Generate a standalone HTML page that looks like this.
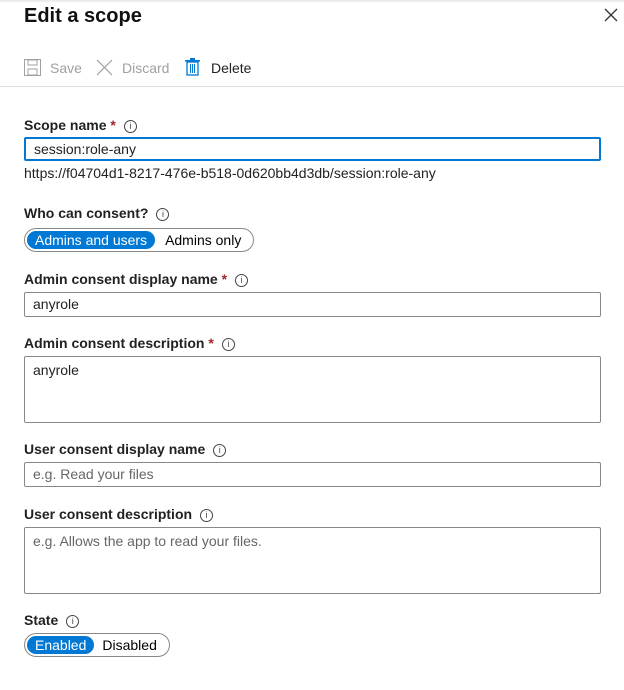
<!DOCTYPE html>
<html><head><style>
body{margin:0;width:624px;height:690px;background:#fff;font-family:"Liberation Sans",sans-serif;color:#000;position:relative;overflow:hidden}
.a{position:absolute;white-space:nowrap}
.lbl{font-size:14px;font-weight:bold;color:#222}
.lbl .s{color:#a4262c}
.info{display:inline-block;width:11px;height:11px;border:1px solid #444;border-radius:50%;font-size:9px;line-height:11px;text-align:center;font-weight:normal;vertical-align:1px;margin-left:8px;color:#444}
.inp{position:absolute;left:24px;width:577px;border:1px solid #8a8886;border-radius:2px;font-size:14px;box-sizing:border-box;padding:0 8px;color:#222;white-space:nowrap}
.ph{color:#666}
.tg{position:absolute;left:24px;height:24px;border:1px solid #8a8886;border-radius:12px;box-sizing:border-box;font-size:14px;display:flex;align-items:center;padding:0 2px;white-space:nowrap}
.tg span{padding:0 8px;line-height:18px;border-radius:9px;white-space:nowrap}
.tg .on{background:#0078d4;color:#fff}
</style></head><body>
<div class="a" style="left:0;top:0;width:624px;height:3px;background:linear-gradient(#e6e6e6,#fff)"></div>
<div class="a" style="left:24px;top:5px;font-size:20px;font-weight:bold;color:#111">Edit a scope</div>
<svg class="a" style="left:604px;top:8px" width="14" height="14"><path d="M1 1L13 13M13 1L1 13" stroke="#333" stroke-width="1.3"/></svg>
<svg class="a" style="left:24px;top:59px" width="17" height="17"><rect x="0.5" y="0.5" width="16" height="16" fill="none" stroke="#a0a0a0"/><rect x="4" y="1" width="9" height="5" fill="none" stroke="#a0a0a0"/><rect x="4" y="10" width="9" height="6" fill="none" stroke="#a0a0a0"/></svg>
<div class="a" style="left:50px;top:60px;font-size:14px;color:#a0a0a0">Save</div>
<svg class="a" style="left:96px;top:59px" width="17" height="17"><path d="M1 1L16 16M16 1L1 16" stroke="#a0a0a0" stroke-width="1.2"/></svg>
<div class="a" style="left:122px;top:60px;font-size:14px;color:#a0a0a0">Discard</div>
<svg class="a" style="left:185px;top:58px" width="15" height="18"><rect x="0" y="2" width="15" height="1.5" fill="#0078d4"/><rect x="5" y="0" width="5" height="2" fill="#0078d4"/><rect x="2" y="4" width="11" height="13" fill="none" stroke="#0078d4" stroke-width="1.3"/><path d="M5.5 6v9M7.5 6v9M9.5 6v9" stroke="#0078d4"/></svg>
<div class="a" style="left:211px;top:60px;font-size:14px;color:#222">Delete</div>
<div class="a" style="left:0;top:86px;width:624px;height:1px;background:#ddd"></div>

<div class="a lbl" style="left:24px;top:117px">Scope name <span class="s">*</span><span class="info">i</span></div>
<div class="inp" style="top:137px;height:24px;line-height:20px;border:2px solid #0078d4">session:role-any</div>
<div class="a" style="left:24px;top:165px;font-size:14px;color:#222">https://f04704d1-8217-476e-b518-0d620bb4d3db/session:role-any</div>

<div class="a lbl" style="left:24px;top:205px">Who can consent?<span class="info">i</span></div>
<div class="tg" style="top:228px;width:230px"><span class="on">Admins and users</span><span style="padding-left:10px">Admins only</span></div>

<div class="a lbl" style="left:24px;top:271px">Admin consent display name <span class="s">*</span><span class="info">i</span></div>
<div class="inp" style="top:292px;height:25px;line-height:23px">anyrole</div>

<div class="a lbl" style="left:24px;top:335px">Admin consent description <span class="s">*</span><span class="info">i</span></div>
<div class="inp" style="top:356px;height:67px;padding-top:5px">anyrole</div>

<div class="a lbl" style="left:24px;top:441px">User consent display name<span class="info">i</span></div>
<div class="inp ph" style="top:462px;height:25px;line-height:23px">e.g. Read your files</div>

<div class="a lbl" style="left:24px;top:506px">User consent description<span class="info">i</span></div>
<div class="inp ph" style="top:527px;height:67px;padding-top:5px">e.g. Allows the app to read your files.</div>

<div class="a lbl" style="left:24px;top:612px">State<span class="info">i</span></div>
<div class="tg" style="top:633px;width:146px"><span class="on">Enabled</span><span>Disabled</span></div>
</body></html>
